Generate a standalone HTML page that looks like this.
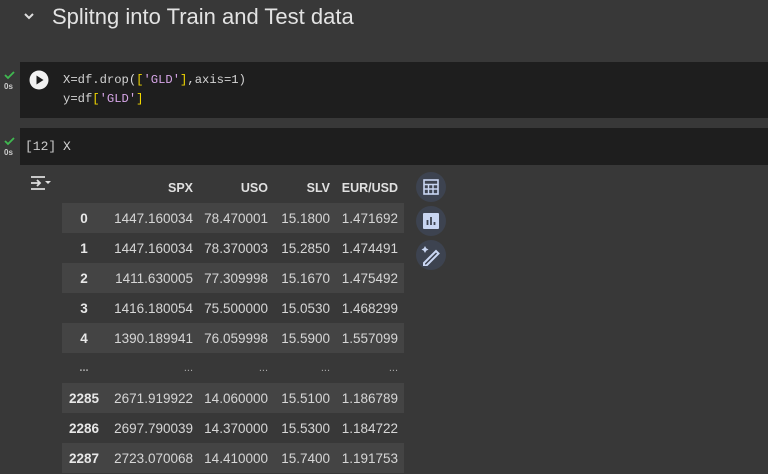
<!DOCTYPE html>
<html><head><meta charset="utf-8"><style>
body{margin:0;width:768px;height:474px;background:#383838;overflow:hidden;position:relative;font-family:"Liberation Sans",sans-serif;color:#e3e3e3}
.a{position:absolute}
.mono{font-family:"Liberation Mono",monospace;font-size:12.2px}
.cell{position:absolute;left:20px;right:0;background:#1e1e1e}
table{position:absolute;left:62px;top:173px;border-collapse:collapse;font-size:13.5px;color:#d6d6d6}
td,th{height:30px;padding:0;text-align:right}
th{font-weight:bold;font-size:12.5px;color:#e0e0e0}
td.i{font-weight:bold;text-align:center;width:44px;color:#e8e8e8}
tr.s td{background:#444444}
tr.d td{color:#aaa;font-size:11px}
.circ{position:absolute;width:30px;height:30px;border-radius:50%;background:#3d4350;left:416px}
</style></head><body>
<svg class="a" style="left:23px;top:12px" width="12" height="10"><path d="M2 2l4 4 4-4" stroke="#ddd" stroke-width="2" fill="none"/></svg>
<div class="a" style="left:52px;top:4px;font-size:22px;color:#e3e3e3">Splitng into Train and Test data</div>

<div class="cell" style="top:62px;height:56px"></div>
<svg class="a" style="left:3px;top:70px" width="14" height="10"><path d="M2 5l3 3 6-6" stroke="#3fb950" stroke-width="1.8" fill="none"/></svg>
<div class="a" style="left:4px;top:82px;font-size:8px;color:#ccc;font-weight:bold">0s</div>
<svg class="a" style="left:29px;top:70px" width="20" height="20"><circle cx="10" cy="10" r="9.5" fill="#f2f2f2"/><path d="M7.5 5.5L14.5 10 7.5 14.5z" fill="#1e1e1e"/></svg>
<div class="a mono" style="left:63px;top:71px;color:#d4d4d4;line-height:19px">X=df.drop(<span style="color:#f1d700">[</span><span style="color:#d7a6e8">'GLD'</span><span style="color:#f1d700">]</span>,axis=1)<br>y=df<span style="color:#f1d700">[</span><span style="color:#d7a6e8">'GLD'</span><span style="color:#f1d700">]</span></div>

<div class="cell" style="top:128px;height:37px"></div>
<svg class="a" style="left:3px;top:136px" width="14" height="10"><path d="M2 5l3 3 6-6" stroke="#3fb950" stroke-width="1.8" fill="none"/></svg>
<div class="a" style="left:4px;top:148px;font-size:8px;color:#ccc;font-weight:bold">0s</div>
<div class="a mono" style="left:25px;top:139px;color:#ccc;font-size:13px">[12]</div>
<div class="a mono" style="left:63px;top:139px;color:#d4d4d4;font-size:13px">X</div>

<svg class="a" style="left:30px;top:174px" width="22" height="18"><path d="M1 3h14M1 15h14M1 9h9M7 6l3 3-3 3" stroke="#ddd" stroke-width="1.8" fill="none"/><path d="M15 7h6l-3 3z" fill="#ddd"/></svg>

<table>
<tr><th style="width:44px"></th><th style="width:87px">SPX</th><th style="width:75px">USO</th><th style="width:62px">SLV</th><th style="width:68px;padding-right:6px">EUR/USD</th></tr>
<tr class="s"><td class="i">0</td><td>1447.160034</td><td>78.470001</td><td>15.1800</td><td style="padding-right:6px">1.471692</td></tr>
<tr><td class="i">1</td><td>1447.160034</td><td>78.370003</td><td>15.2850</td><td style="padding-right:6px">1.474491</td></tr>
<tr class="s"><td class="i">2</td><td>1411.630005</td><td>77.309998</td><td>15.1670</td><td style="padding-right:6px">1.475492</td></tr>
<tr><td class="i">3</td><td>1416.180054</td><td>75.500000</td><td>15.0530</td><td style="padding-right:6px">1.468299</td></tr>
<tr class="s"><td class="i">4</td><td>1390.189941</td><td>76.059998</td><td>15.5900</td><td style="padding-right:6px">1.557099</td></tr>
<tr class="d"><td class="i">...</td><td>...</td><td>...</td><td>...</td><td style="padding-right:6px">...</td></tr>
<tr class="s"><td class="i">2285</td><td>2671.919922</td><td>14.060000</td><td>15.5100</td><td style="padding-right:6px">1.186789</td></tr>
<tr><td class="i">2286</td><td>2697.790039</td><td>14.370000</td><td>15.5300</td><td style="padding-right:6px">1.184722</td></tr>
<tr class="s"><td class="i">2287</td><td>2723.070068</td><td>14.410000</td><td>15.7400</td><td style="padding-right:6px">1.191753</td></tr>
</table>

<div class="circ" style="top:172px"></div>
<svg class="a" style="left:423px;top:179px" width="16" height="16"><rect x="1" y="1" width="14" height="14" fill="none" stroke="#c9d6f2" stroke-width="1.6"/><path d="M1 5.5h14M1 10h14M5.5 5.5v9.5M10 5.5v9.5" stroke="#c9d6f2" stroke-width="1.4"/></svg>
<div class="circ" style="top:206px"></div>
<svg class="a" style="left:423px;top:213px" width="16" height="16"><rect x="0" y="0" width="16" height="16" rx="1" fill="#c9d6f2"/><path d="M4.5 12V7M8 12V4M11.5 12V9" stroke="#3d4350" stroke-width="1.8"/></svg>
<div class="circ" style="top:240px"></div>
<svg class="a" style="left:420px;top:244px" width="22" height="22"><path d="M4 19L16 7l2.5 2.5L6.5 21.5H4z" fill="none" stroke="#c9d6f2" stroke-width="2"/><path d="M5 2l1.2 2.3L8.5 5.5 6.2 6.7 5 9 3.8 6.7 1.5 5.5 3.8 4.3z" fill="#c9d6f2"/></svg>
</body></html>
